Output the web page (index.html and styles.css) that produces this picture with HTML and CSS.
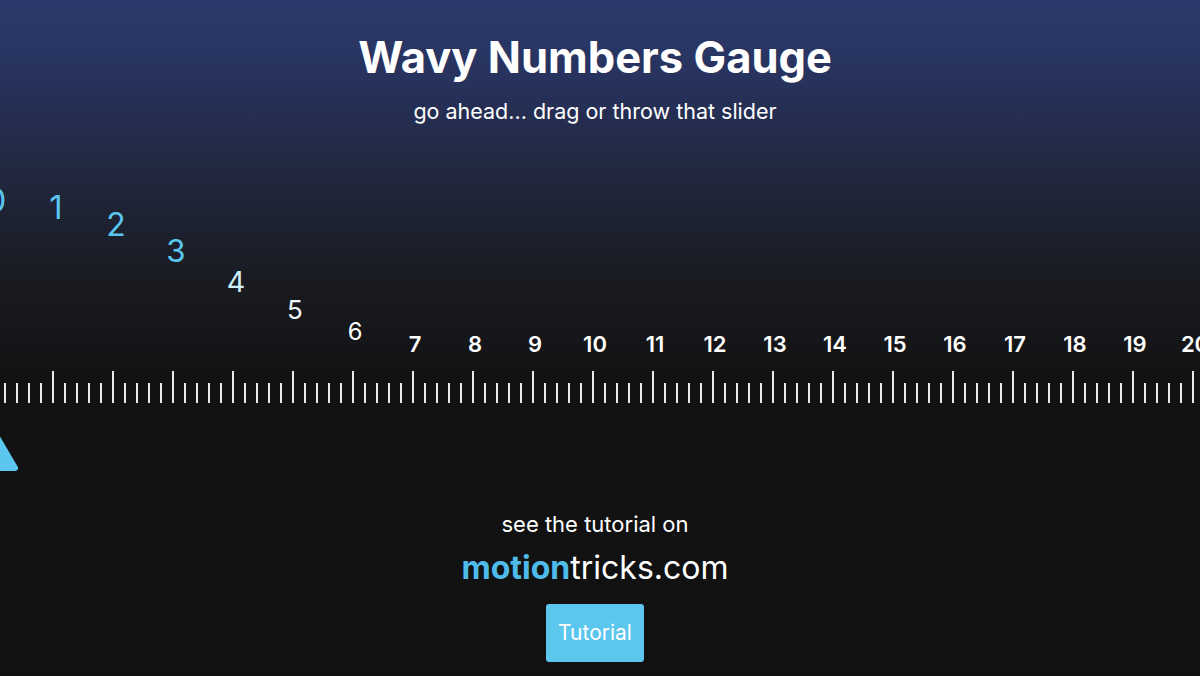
FILE: index.html
```html
<!DOCTYPE html>
<html lang="en">
<head>
<meta charset="utf-8">
<title>Wavy Numbers Gauge</title>
<link rel="stylesheet" href="styles.css">
</head>
<body>
<main class="page">
  <h1 class="title">Wavy Numbers Gauge</h1>
  <p class="subtitle">go ahead... drag or throw that slider</p>

  <section class="gauge">
    <div class="numbers">
      <span class="num wave blue" style="--x:-4px;--dy:-144px;--s:1.5">0</span>
      <span class="num wave blue" style="--x:56px;--dy:-137px;--s:1.5">1</span>
      <span class="num wave blue" style="--x:116px;--dy:-120px;--s:1.45">2</span>
      <span class="num wave blue" style="--x:176px;--dy:-93px;--s:1.42">3</span>
      <span class="num wave pale" style="--x:236px;--dy:-62px;--s:1.3">4</span>
      <span class="num wave paler" style="--x:295px;--dy:-34px;--s:1.18">5</span>
      <span class="num wave" style="--x:355px;--dy:-13px;--s:1.08">6</span>
      <span class="num" style="--x:415px">7</span>
      <span class="num" style="--x:475px">8</span>
      <span class="num" style="--x:535px">9</span>
      <span class="num" style="--x:595px">10</span>
      <span class="num" style="--x:655px">11</span>
      <span class="num" style="--x:715px">12</span>
      <span class="num" style="--x:775px">13</span>
      <span class="num" style="--x:835px">14</span>
      <span class="num" style="--x:895px">15</span>
      <span class="num" style="--x:955px">16</span>
      <span class="num" style="--x:1015px">17</span>
      <span class="num" style="--x:1075px">18</span>
      <span class="num" style="--x:1135px">19</span>
      <span class="num" style="--x:1195px">20</span>
    </div>
    <div class="ruler"></div>
    <div class="track">
      <svg class="handle" width="50" height="44" viewBox="0 0 50 44" aria-hidden="true">
        <polygon points="25,4 45,38 5,38" fill="#5bc6ee" stroke="#5bc6ee" stroke-width="6" stroke-linejoin="round"/>
      </svg>
    </div>
  </section>

  <p class="see">see the tutorial on</p>
  <p class="site"><span class="site-accent">motion</span>tricks.com</p>
  <a class="btn" href="#">Tutorial</a>
</main>
</body>
</html>
```

FILE: styles.css
```css
html, body {
  margin: 0;
  padding: 0;
}

body {
  width: 1200px;
  height: 676px;
  overflow: hidden;
  font-family: "Inter", "Liberation Sans", sans-serif;
  color: #ffffff;
  background: linear-gradient(180deg,
    #2c3a6b 0px,
    #27325d 80px,
    #21283f 170px,
    #191b21 280px,
    #121213 380px,
    #111111 676px);
}

.page {
  height: 676px;
  padding-right: 10px;
  display: flex;
  flex-direction: column;
  align-items: center;
}

.title {
  margin: 36px 0 0;
  font-size: 43.5px;
  line-height: 1;
  font-weight: 700;
  letter-spacing: 0;
}

.subtitle {
  margin: 21px 0 0;
  font-size: 21.5px;
  line-height: 1;
  font-weight: 400;
}

.gauge {
  align-self: flex-start;
  width: 1200px;
  display: flex;
  flex-direction: column;
}

.numbers {
  position: relative;
  height: 243px;
}

.num {
  position: absolute;
  top: 210px;
  left: var(--x);
  font-size: 22px;
  line-height: 24px;
  font-weight: 600;
  color: #ffffff;
  white-space: nowrap;
  transform-origin: 50% 50%;
  transform: translateX(-50%) translateY(var(--dy, 0px)) scale(var(--s, 1));
}

.num.wave {
  font-weight: 400;
}

.num.blue {
  color: #5ac6ef;
}

.num.pale {
  color: #cdeefb;
}

.num.paler {
  color: #eef8fd;
}

.ruler {
  margin-top: 6px;
  height: 32px;
  background-image:
    linear-gradient(90deg, #e9e9e9 0 2px, transparent 2px),
    linear-gradient(90deg, #e9e9e9 0 2px, transparent 2px);
  background-size: 60px 32px, 12px 20px;
  background-position: 52px 0, 4px 100%;
  background-repeat: repeat-x, repeat-x;
}

.track {
  position: relative;
  height: 80px;
}

.handle {
  position: absolute;
  left: -30px;
  top: 27px;
}

.see {
  margin: 30px 0 0;
  font-size: 22px;
  line-height: 1;
}

.site {
  margin: 17px 0 0;
  font-size: 32px;
  line-height: 1;
  font-weight: 400;
}

.site-accent {
  color: #4fbbea;
  font-weight: 700;
}

.btn {
  margin-top: 20px;
  display: block;
  width: 98px;
  height: 58px;
  line-height: 58px;
  text-align: center;
  border-radius: 3px;
  background: #5bc6ee;
  color: #ffffff;
  font-size: 21px;
  text-decoration: none;
}
```
